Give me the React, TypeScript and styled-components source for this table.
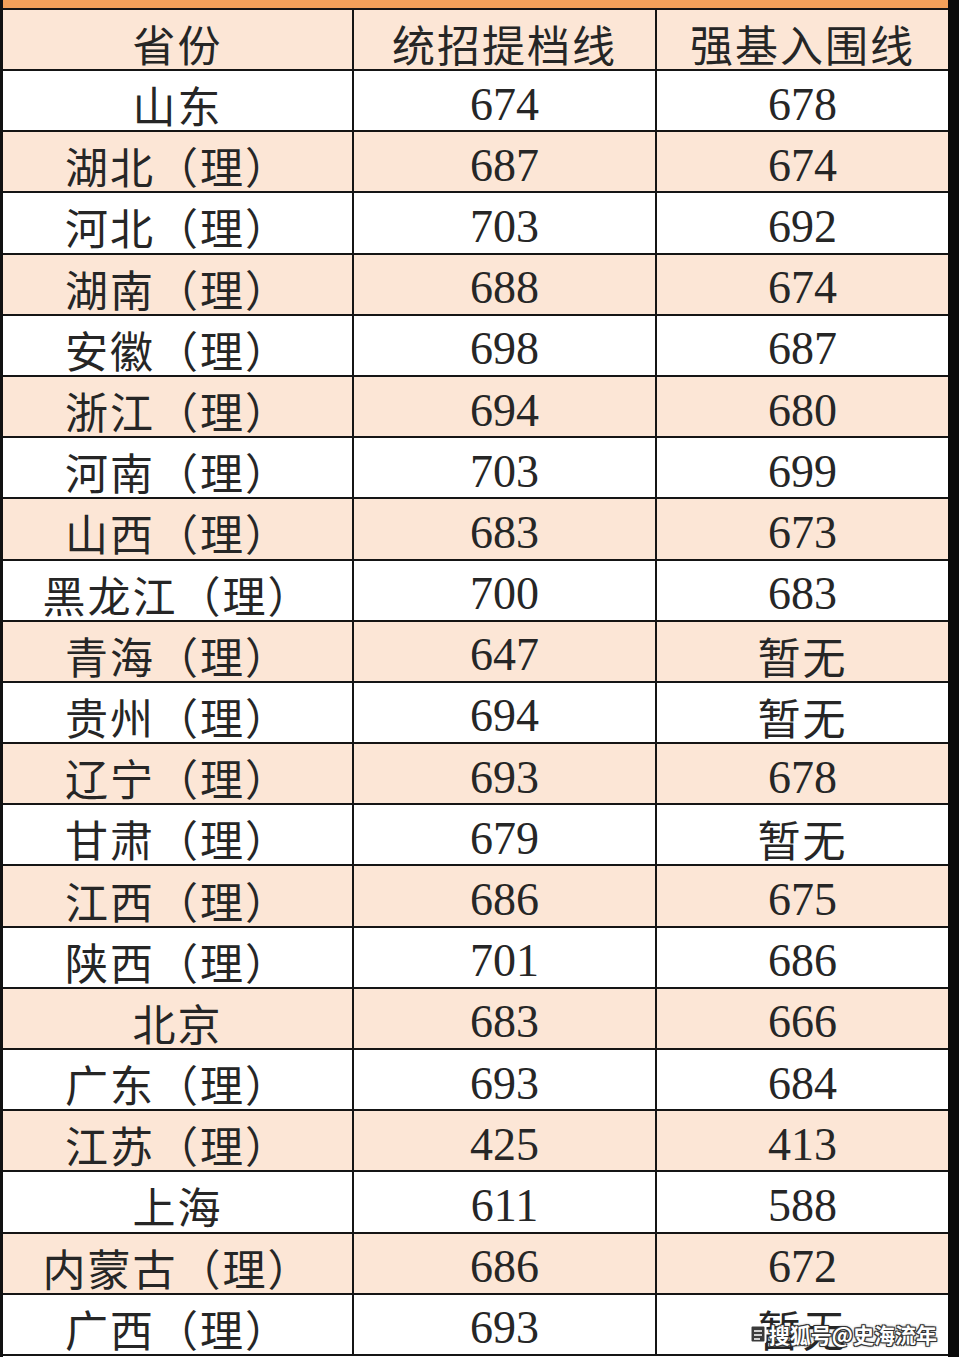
import React from 'react';
import styled, { createGlobalStyle } from 'styled-components';

const GlobalStyle = createGlobalStyle`
  html, body {
    margin: 0;
    padding: 0;
    background: #ffffff;
  }
`;

type Row = { province: string; unified: string; strong: string };

const rows: Row[] = [
  { province: '山东', unified: '674', strong: '678' },
  { province: '湖北（理）', unified: '687', strong: '674' },
  { province: '河北（理）', unified: '703', strong: '692' },
  { province: '湖南（理）', unified: '688', strong: '674' },
  { province: '安徽（理）', unified: '698', strong: '687' },
  { province: '浙江（理）', unified: '694', strong: '680' },
  { province: '河南（理）', unified: '703', strong: '699' },
  { province: '山西（理）', unified: '683', strong: '673' },
  { province: '黑龙江（理）', unified: '700', strong: '683' },
  { province: '青海（理）', unified: '647', strong: '暂无' },
  { province: '贵州（理）', unified: '694', strong: '暂无' },
  { province: '辽宁（理）', unified: '693', strong: '678' },
  { province: '甘肃（理）', unified: '679', strong: '暂无' },
  { province: '江西（理）', unified: '686', strong: '675' },
  { province: '陕西（理）', unified: '701', strong: '686' },
  { province: '北京', unified: '683', strong: '666' },
  { province: '广东（理）', unified: '693', strong: '684' },
  { province: '江苏（理）', unified: '425', strong: '413' },
  { province: '上海', unified: '611', strong: '588' },
  { province: '内蒙古（理）', unified: '686', strong: '672' },
  { province: '广西（理）', unified: '693', strong: '暂无' },
];

const Frame = styled.div`
  position: relative;
  display: flex;
  width: 959px;
  height: 1357px;
  overflow: hidden;
  background: #0a0a0a;
`;

const Sheet = styled.div`
  width: 948px;
  flex: none;
  box-sizing: border-box;
  border-left: 3px solid #111;
  background: #ffffff;
  display: flex;
  flex-direction: column;
`;

const OrangeBar = styled.div`
  height: 8px;
  flex: none;
  background: #f2a05a;
`;

const TableRow = styled.div<{ $shaded: boolean; $top?: boolean }>`
  flex: none;
  height: ${({ $top }) => ($top ? '63px' : '61.2px')};
  box-sizing: border-box;
  display: grid;
  grid-template-columns: 351px 303px 291px;
  border-top: ${({ $top }) => ($top ? '2px solid #151515' : 'none')};
  border-bottom: 2px solid #151515;
  background: ${({ $shaded }) => ($shaded ? '#fce6d6' : '#ffffff')};
`;

const Cell = styled.div<{ $numeric?: boolean; $last?: boolean }>`
  display: flex;
  align-items: center;
  justify-content: center;
  padding-top: 8px;
  box-sizing: border-box;
  border-right: ${({ $last }) => ($last ? 'none' : '2px solid #151515')};
  color: #262626;
  font-family: ${({ $numeric }) =>
    $numeric
      ? '"Liberation Serif", "Noto Sans CJK SC", serif'
      : '"Noto Sans CJK SC", sans-serif'};
  font-size: ${({ $numeric }) => ($numeric ? '46px' : '43px')};
  letter-spacing: ${({ $numeric }) => ($numeric ? '0' : '2px')};
  font-weight: 400;
  line-height: 1;
  white-space: nowrap;
  text-spacing-trim: space-all;
`;

const RightStrip = styled.div`
  flex: 1;
  background: #0a0a0a;
`;

const Watermark = styled.div`
  position: absolute;
  right: 22px;
  bottom: 8px;
  display: flex;
  align-items: center;
  gap: 2px;
  font-family: "Noto Sans CJK SC", sans-serif;
  font-weight: 700;
  font-size: 21px;
  color: #ffffff;
  text-shadow:
    1px 1px 0 #333,
    -1px -1px 0 #333,
    1px -1px 0 #333,
    -1px 1px 0 #333,
    0 0 3px #000;
`;

function SohuIcon() {
  return (
    <svg width="18" height="20" viewBox="0 0 18 20">
      <rect x="1.5" y="1.5" width="15" height="17" rx="2" fill="#3a3a3a" stroke="#ffffff" strokeWidth="2" />
      <path d="M5 7h8M5 11h8M5 15h6" stroke="#ffffff" strokeWidth="1.6" />
    </svg>
  );
}

export default function App() {
  return (
    <>
      <GlobalStyle />
      <Frame>
        <Sheet>
          <OrangeBar />
          <TableRow $shaded $top>
            <Cell>省份</Cell>
            <Cell>统招提档线</Cell>
            <Cell $last>强基入围线</Cell>
          </TableRow>
          {rows.map((row, i) => (
            <TableRow key={row.province} $shaded={i % 2 === 1}>
              <Cell>{row.province}</Cell>
              <Cell $numeric>{row.unified}</Cell>
              <Cell $numeric={!row.strong.startsWith('暂')} $last>
                {row.strong}
              </Cell>
            </TableRow>
          ))}
        </Sheet>
        <RightStrip />
        <Watermark>
          <SohuIcon />
          <span>搜狐号@史海流年</span>
        </Watermark>
      </Frame>
    </>
  );
}
